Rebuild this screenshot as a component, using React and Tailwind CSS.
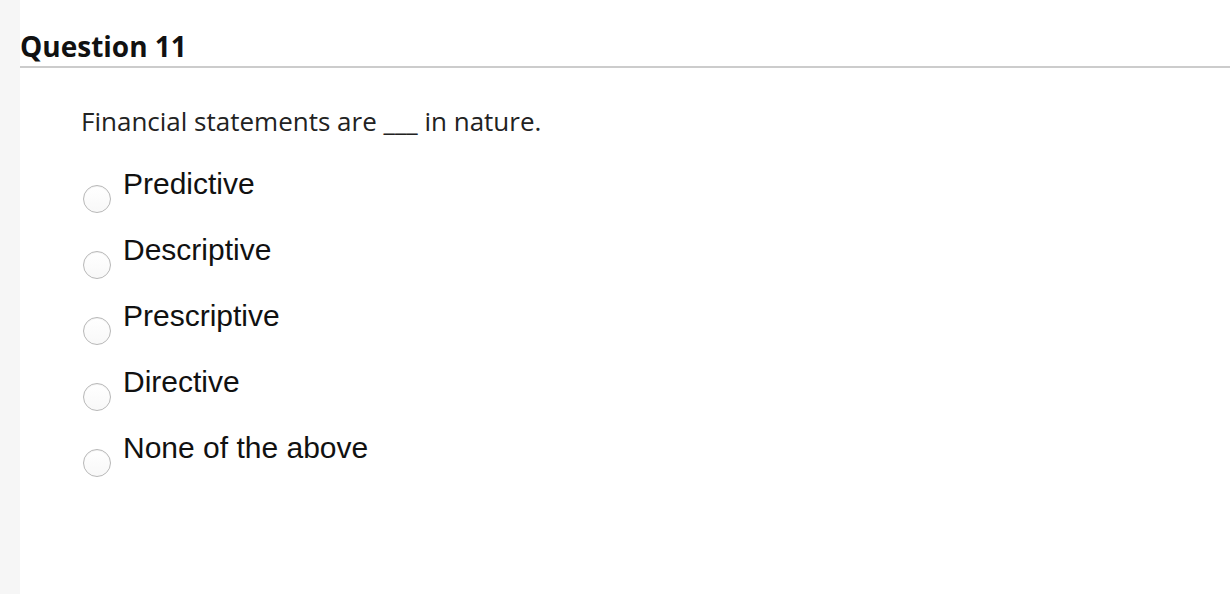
import React from 'react';

const options = ['Predictive', 'Descriptive', 'Prescriptive', 'Directive', 'None of the above'];

const Radio = () => (
  <span className="mt-[19px] block h-[28px] w-[28px] shrink-0 rounded-full border border-[#b8b8b8] bg-gradient-to-b from-white to-[#f8f8f8] shadow-[inset_0_1px_1px_rgba(0,0,0,0.05)]" />
);

export default function App() {
  return (
    <div className="flex h-[594px] w-[1230px] bg-white">
      {/* left gutter */}
      <div className="w-[20px] shrink-0 bg-[#f6f6f6]" />

      <div className="flex-1">
        {/* Heading */}
        <div className="border-b-2 border-[#cccccc] pt-[28px] pb-[2px]">
          <h2 className="font-['Open_Sans',sans-serif] text-[28px] font-bold leading-[36px] text-[#111]">
            Question 11
          </h2>
        </div>

        {/* Question */}
        <div className="pl-[61px] pt-[35px]">
          <p className="font-['Open_Sans',sans-serif] text-[26px] leading-[36px] text-[#222]">
            Financial statements are ___ in nature.
          </p>

          <div className="mt-[27px] flex flex-col">
            {options.map((opt) => (
              <label key={opt} className="flex h-[66px] items-start gap-[12px] pl-[2px]">
                <Radio />
                <span className="font-['Liberation_Sans',Arial,sans-serif] text-[30px] leading-[36px] text-[#111]">
                  {opt}
                </span>
              </label>
            ))}
          </div>
        </div>
      </div>
    </div>
  );
}
